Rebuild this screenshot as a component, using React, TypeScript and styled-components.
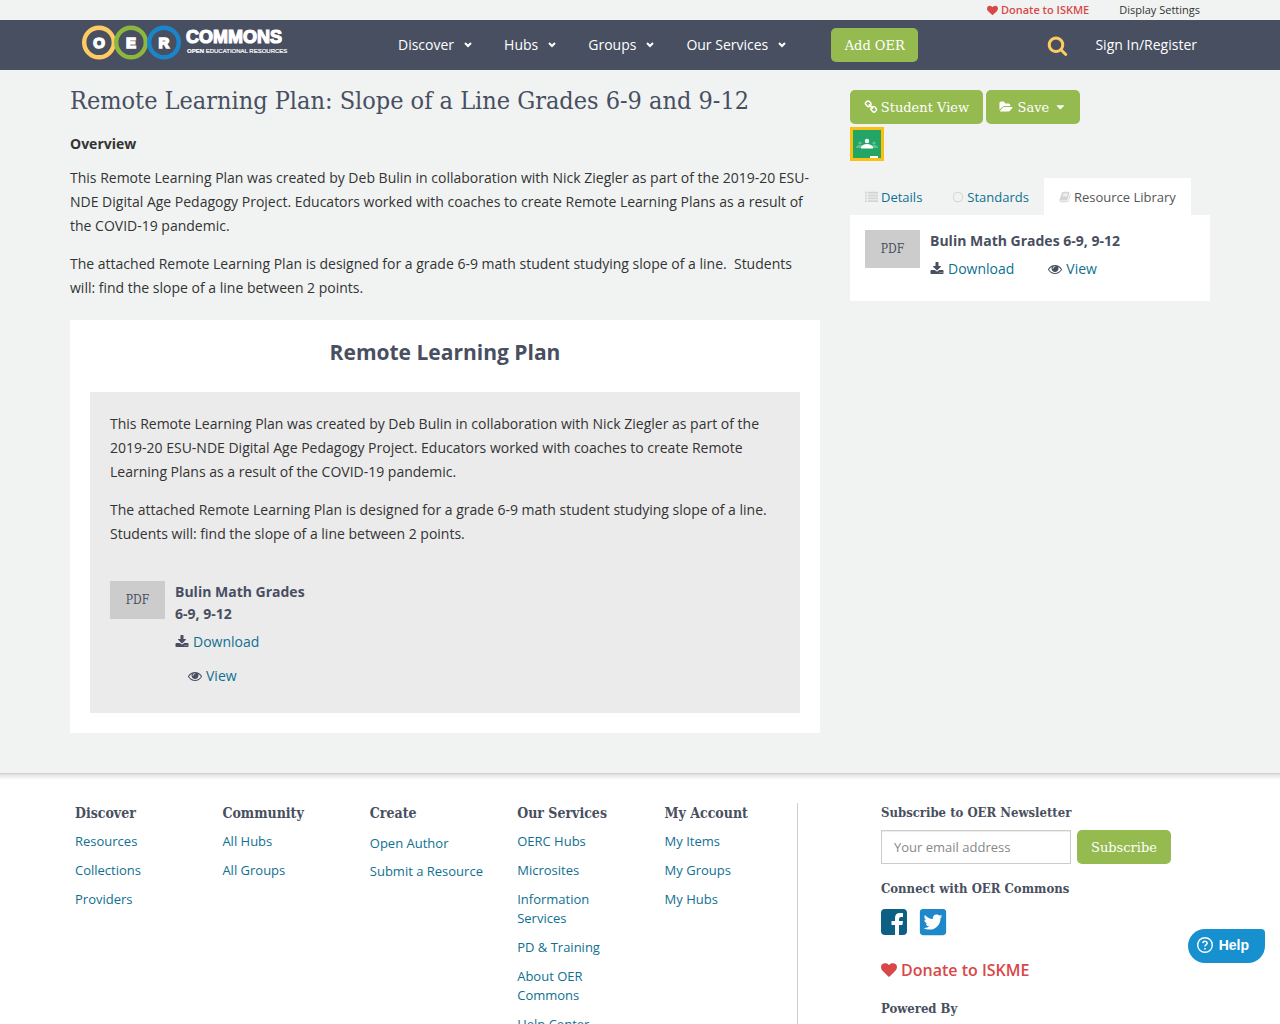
import React from "react";
import styled, { createGlobalStyle } from "styled-components";
import { FaTwitterSquare } from "react-icons/fa";

const sans = `"Open Sans", "Noto Sans", sans-serif`;
const slab = `"DejaVu Serif", serif`;
const slabNarrow = `"DejaVu Serif Condensed", "DejaVu Serif", serif`;
const navy = "#484f60";
const green = "#95ba4f";
const blue = "#0f7090";
const red = "#d94848";

const GlobalStyle = createGlobalStyle`
  *, *::before, *::after { box-sizing: border-box; }
  body { margin: 0; background: #f0f3f2; color: #333; font: 14px/24px ${sans}; }
  h1, h2, h3, p, ul { margin: 0; padding: 0; }
  ul { list-style: none; }
  a { text-decoration: none; color: ${blue}; }
  button, input { font-family: inherit; }
`;

/* Icons, drawn on a 1792-unit grid */
const paths = {
  heart: "M896 1664q-26 0-44-18l-624-602q-10-8-27.5-26T145 952.5 77 855 23.5 734 0 596q0-220 127-344t351-124q62 0 126.5 21.5t120 58T820 276t76 68q36-36 76-68t95.5-68.5 120-58T1314 128q224 0 351 124t127 344q0 221-229 450l-623 600q-18 18-44 18z",
  search: "M1216 832q0-185-131.5-316.5T768 384 451.5 515.5 320 832t131.5 316.5T768 1280t316.5-131.5T1216 832zm512 832q0 52-38 90t-90 38q-54 0-90-38l-343-342q-179 124-399 124-143 0-273.5-55.5t-225-150-150-225T64 832t55.5-273.5 150-225 225-150T768 128t273.5 55.5 225 150 150 225T1472 832q0 220-124 399l343 343q37 37 37 90z",
  folder: "M1943 952q0 31-31 66l-336 396q-43 51-120.5 86.5t-143.5 35.5h-1088q-34 0-60.5-13t-26.5-43q0-31 31-66l336-396q43-51 120.5-86.5t143.5-35.5h1088q34 0 60.5 13t26.5 43zm-343-344v160h-832q-94 0-197 47.5t-164 119.5l-337 396-5 6q0-4-.5-12.5t-.5-12.5v-960q0-92 66-158t158-66h320q92 0 158 66t66 158v32h544q92 0 158 66t66 158z",
  caret: "M1408 704q0 26-19 45l-448 448q-19 19-45 19t-45-19l-448-448q-19-19-19-45t19-45 45-19h896q26 0 45 19t19 45z",
  download: "M1344 1344q0-26-19-45t-45-19-45 19-19 45 19 45 45 19 45-19 19-45zm256 0q0-26-19-45t-45-19-45 19-19 45 19 45 45 19 45-19 19-45zm128-224v320q0 40-28 68t-68 28h-1472q-40 0-68-28t-28-68v-320q0-40 28-68t68-28h465l135 136q58 56 136 56t136-56l136-136h464q40 0 68 28t28 68zm-325-569q17 41-14 70l-448 448q-18 19-45 19t-45-19l-448-448q-31-29-14-70 17-39 59-39h256v-448q0-26 19-45t45-19h256q26 0 45 19t19 45v448h256q42 0 59 39z",
  eye: "M1664 960q-152-236-381-353 61 104 61 225 0 185-131.5 316.5t-316.5 131.5-316.5-131.5-131.5-316.5q0-121 61-225-229 117-381 353 133 205 333.5 326.5t434.5 121.5 434.5-121.5 333.5-326.5zm-720-384q0-20-14-34t-34-14q-125 0-214.5 89.5t-89.5 214.5q0 20 14 34t34 14 34-14 14-34q0-86 61-147t147-61q20 0 34-14t14-34zm848 384q0 34-20 69-140 230-376.5 368.5t-499.5 138.5-499.5-139-376.5-368q-20-35-20-69t20-69q140-229 376.5-368t499.5-139 499.5 139 376.5 368q20 35 20 69z",
  list: "M0 256h256v256H0zM0 640h256v256H0zM0 1024h256v256H0zM0 1408h256v256H0zM384 256h1408v256H384zM384 640h1408v256H384zM384 1024h1408v256H384zM384 1408h1408v256H384z",
  circle: "M896 128a768 768 0 1 0 0 1536 768 768 0 0 0 0-1536zm0 128a640 640 0 1 1 0 1280 640 640 0 0 1 0-1280z",
  book: "M1703 478q40 57 18 129l-275 906q-19 64-76.5 107.5t-122.5 43.5h-923q-77 0-148.5-53.5t-99.5-131.5q-24-67-2-127 0-4 3-27t4-37q1-8-3-21.5t-3-19.5q2-11 8-21t16.5-23.5 16.5-23.5q23-38 45-91.5t30-91.5q3-10 .5-30t-.5-28q3-11 17-28t17-23q21-36 42-92t25-90q1-9-2.5-32t.5-28q4-13 22-30.5t22-22.5q19-26 42.5-84.5t27.5-96.5q1-8-3-25.5t-2-26.5q2-8 9-18t18-23 17-21q8-12 16.5-30.5t15-35 16-36 19.5-32 26.5-23.5 36-11.5 47.5 5.5l-1 3q38-9 51-9h761q74 0 114 56t18 130l-274 906q-36 119-71.5 153.5t-128.5 34.5h-869q-27 0-38 15-11 16-1 43 24 70 144 70h923q29 0 56-15.5t35-41.5l300-987q7-22 5-57 38 15 59 43zm-1064 2q-4 13 2 22.5t20 9.5h608q13 0 25.5-9.5t16.5-22.5l21-64q4-13-2-22.5t-20-9.5h-608q-13 0-25.5 9.5t-16.5 22.5zm-83 256q-4 13 2 22.5t20 9.5h608q13 0 25.5-9.5t16.5-22.5l21-64q4-13-2-22.5t-20-9.5h-608q-13 0-25.5 9.5t-16.5 22.5z",
  link: "M1520 1216q0-40-28-68l-208-208q-28-28-68-28-42 0-72 32 3 3 19 18.5t21.5 21.5 15 19 13 25.5 3.5 27.5q0 40-28 68t-68 28q-15 0-27.5-3.5t-25.5-13-19-15-21.5-21.5-18.5-19q-33 31-33 73 0 40 28 68l206 207q27 27 68 27 40 0 68-26l147-146q28-28 28-67zm-703-705q0-40-28-68l-206-207q-28-28-68-28-39 0-68 27l-147 146q-28 28-28 67 0 40 28 68l208 208q27 27 68 27 42 0 72-31-3-3-19-18.5t-21.5-21.5-15-19-13-25.5-3.5-27.5q0-40 28-68t68-28q15 0 27.5 3.5t25.5 13 19 15 21.5 21.5 18.5 19q33-31 33-73zm895 705q0 120-85 203l-147 146q-83 83-203 83-121 0-204-85l-206-207q-83-83-83-203 0-123 88-209l-88-88q-86 88-208 88-120 0-204-84l-208-208q-84-84-84-204t85-203l147-146q83-83 203-83 121 0 204 85l206 207q83 83 83 203 0 123-88 209l88 88q86-88 208-88 120 0 204 84l208 208q84 84 84 204z",
};

function Icon({ name, size = 14, color = "currentColor" }: { name: keyof typeof paths; size?: number; color?: string }) {
  const w = name === "folder" ? 1943 : 1792;
  return (
    <svg width={Math.round((size * w) / 1792)} height={size} viewBox={`0 0 ${w} 1792`} fill={color} aria-hidden="true">
      <path d={paths[name]} />
    </svg>
  );
}

const Container = styled.div`
  width: 100%;
  max-width: 1170px;
  margin: 0 auto;
  padding: 0 15px;
`;

const TopLinks = styled(Container)`
  display: flex;
  justify-content: flex-end;
  gap: 30px;
  padding-right: 25px;
  font-size: 11px;
  line-height: 20px;
`;

const DonateLink = styled.a<{ $large?: boolean }>`
  display: inline-flex;
  align-items: center;
  gap: ${(p) => (p.$large ? 4 : 3)}px;
  color: ${red};
  font-weight: 600;
  font-size: ${(p) => (p.$large ? 16 : 11)}px;
`;

const PlainLink = styled.a`
  color: #333;
`;

const Header = styled.header`
  background: ${navy};
`;

const HeaderInner = styled(Container)`
  display: flex;
  align-items: center;
  height: 50px;
  padding: 0 28px 0 27px;
`;

const LogoLink = styled.a`
  display: flex;
  width: 316px;
  padding-bottom: 4px;
`;

const Nav = styled.nav`
  display: flex;
  gap: 32px;
`;

const NavButton = styled.button`
  display: flex;
  align-items: center;
  gap: 10px;
  padding: 0;
  border: 0;
  background: none;
  color: #fff;
  font-size: 14px;
  line-height: 24px;
`;

const Button = styled.button`
  display: inline-flex;
  align-items: center;
  justify-content: center;
  height: 34px;
  padding: 0 13px;
  border: 0;
  border-radius: 5px;
  background: ${green};
  color: #fff;
  font-family: ${slab};
  font-size: 13px;
  white-space: nowrap;
`;

const AddButton = styled(Button)`
  width: 87px;
  margin-left: 45px;
`;

const HeaderTools = styled.div`
  display: flex;
  align-items: center;
  gap: 27px;
  margin-left: auto;
`;

const IconButton = styled.button`
  display: flex;
  padding: 0;
  border: 0;
  background: none;
`;

const SignInLink = styled.a`
  color: #fff;
`;

const Columns = styled.div`
  display: grid;
  grid-template-columns: 2fr 1fr;
  max-width: 1170px;
  margin: 0 auto;
`;

const Main = styled.main`
  padding: 16px 15px 40px;
`;

const Aside = styled.aside`
  padding: 20px 15px;
`;

const Title = styled.h1`
  color: ${navy};
  font: 400 25px/30px ${slabNarrow};
  margin-bottom: 16px;
`;

const Overview = styled.h2`
  font-size: 14px;
  line-height: 24px;
  margin-bottom: 10px;
`;

const Paragraph = styled.p`
  margin-bottom: 14px;
`;

const PlanCard = styled.section`
  margin-top: 20px;
  padding: 20px;
  background: #fff;
`;

const PlanTitle = styled.h2`
  margin-bottom: 28px;
  color: ${navy};
  font-size: 21px;
  line-height: 24px;
  text-align: center;
`;

const PlanBody = styled.div`
  padding: 20px 20px 25px;
  background: #ebebeb;
`;

const Attachment = styled.div<{ $narrow?: boolean }>`
  display: flex;
  align-items: flex-start;
  gap: 10px;
  width: ${(p) => (p.$narrow ? "200px" : "auto")};
  margin-top: ${(p) => (p.$narrow ? 35 : 0)}px;
`;

const FileType = styled.div`
  flex: none;
  width: 55px;
  background: #ccc;
  color: ${navy};
  font: 12px/38px ${slabNarrow};
  text-align: center;
`;

const FileName = styled.h3`
  color: ${navy};
  font-size: 14px;
  line-height: 22px;
`;

const FileActions = styled.div<{ $stacked?: boolean }>`
  display: flex;
  flex-direction: ${(p) => (p.$stacked ? "column" : "row")};
  gap: ${(p) => (p.$stacked ? 10 : 34)}px;
  padding-top: 5px;
`;

const FileAction = styled.a<{ $indent?: boolean }>`
  display: flex;
  align-items: center;
  gap: 4px;
  padding-left: ${(p) => (p.$indent ? 13 : 0)}px;
  svg { color: ${navy}; }
`;

const ButtonRow = styled.div`
  display: flex;
  gap: 3px;
  margin-bottom: 3px;
`;

const StudentButton = styled(Button)`
  gap: 3px;
  width: 133px;
`;

const SaveButton = styled(Button)`
  gap: 5px;
  width: 94px;
`;

const Tabs = styled.div`
  display: flex;
  margin-top: 17px;
`;

const Tab = styled.button<{ $active?: boolean }>`
  display: flex;
  align-items: center;
  gap: 3px;
  height: 37px;
  padding: 0 15px;
  border: 0;
  background: ${(p) => (p.$active ? "#fff" : "transparent")};
  color: ${(p) => (p.$active ? "#555" : blue)};
  font-size: 13px;
  white-space: nowrap;
`;

const TabPanel = styled.div`
  padding: 15px 15px 20px;
  background: #fff;
`;

const Footer = styled.footer`
  padding-top: 30px;
  background: linear-gradient(#c8cbca, #e6e6e6 2px, #fff 7px);
`;

const FooterInner = styled(Container)`
  display: flex;
  padding-left: 20px;
`;

const FooterMenus = styled.div`
  display: grid;
  grid-template-columns: repeat(5, 1fr);
  column-gap: 15px;
  width: 64%;
  max-width: 723px;
  border-right: 1px solid #ccc;
  font-size: 13px;
  line-height: 19px;
`;

const FooterHeading = styled.h3`
  display: block;
  color: ${navy};
  font: 700 14px/20px ${slabNarrow};
  white-space: nowrap;
`;

const AsideHeading = styled(FooterHeading)`
  font-size: 13px;
`;

const MenuList = styled.ul<{ $compact?: boolean }>`
  display: flex;
  flex-direction: column;
  gap: ${(p) => (p.$compact ? 9 : 10)}px;
  padding: ${(p) => (p.$compact ? 11 : 9)}px 15px 0 0;
`;

const MenuLink = styled.a`
  display: block;
`;

const FooterAside = styled.div`
  flex: 1;
  padding-left: 83px;
`;

const SubscribeForm = styled.form`
  display: flex;
  gap: 6px;
  margin: 7px 0 15px;
`;

const EmailInput = styled.input`
  width: 190px;
  height: 34px;
  padding: 0 12px;
  border: 1px solid #ccc;
  box-shadow: inset 0 1px 1px rgba(0, 0, 0, 0.08);
  font-size: 13px;
  &::placeholder { color: #888; }
`;

const SubscribeButton = styled(Button)`
  width: 94px;
`;

const SocialLinks = styled.div`
  display: flex;
  align-items: center;
  gap: 9px;
  margin: 8px 0 21px;
`;

const SocialLink = styled.a`
  display: flex;
  color: #1e88cb;
`;

const PoweredBy = styled.div`
  padding-top: 14px;
`;

const HelpButton = styled.button`
  position: fixed;
  right: 15px;
  bottom: 61px;
  display: flex;
  align-items: center;
  gap: 5px;
  height: 34px;
  padding: 0 16px 2px 8px;
  border: 0;
  border-radius: 17px 4px 17px 17px;
  background: #1790d0;
  color: #fff;
  font: 700 14px "Liberation Sans", Arial, sans-serif;
`;

function Logo() {
  const rings: [string, string, number][] = [
    ["O", "#fdcb62", 17],
    ["E", "#8bb63f", 49],
    ["R", "#1b85cc", 82],
  ];
  return (
    <svg width="210" height="36" viewBox="0 0 210 36" role="img" aria-label="OER Commons">
      {rings.map(([letter, color, x]) => (
        <React.Fragment key={letter}>
          <circle cx={x} cy="17.500" r="14.800" fill="none" stroke={color} strokeWidth="4.400" />
          <text x={x} y="23" fill="#fff" stroke="#fff" strokeWidth="1.500" textAnchor="middle" fontFamily="Liberation Sans, Arial, sans-serif" fontSize="15" fontWeight="700">{letter}</text>
        </React.Fragment>
      ))}
      <text x="104" y="17.500" fill="#fff" stroke="#fff" strokeWidth="1.200" fontFamily="Liberation Sans, Arial, sans-serif" fontSize="18" fontWeight="700">COMMONS</text>
      <text x="105" y="28" fill="#fff" stroke="#fff" strokeWidth="0.200" fontFamily="Liberation Sans, Arial, sans-serif" fontSize="6">
        <tspan fontWeight="700">OPEN</tspan> EDUCATIONAL RESOURCES
      </text>
    </svg>
  );
}

function ClassroomIcon() {
  return (
    <svg width="34" height="34" viewBox="0 0 34 34" role="img" aria-label="Share to Google Classroom">
      <path d="M0 0h34v34H0z" fill="#fcc011" />
      <path d="M3 3h28v28H3z" fill="#23a566" />
      <g fill="#63bf91">
        <circle cx="10" cy="16" r="1.6" />
        <circle cx="24" cy="16" r="1.6" />
        <path d="M6 21v-1q1-2 4-2t4 1v2zM28 21v-1q-1-2-4-2t-4 1v2z" />
      </g>
      <g fill="#fff">
        <circle cx="17" cy="14" r="2.2" />
        <path d="M11 21.500v-1.500q2-3 6-3t6 3v1.500zM20 29h8v2h-8z" />
      </g>
    </svg>
  );
}

function FacebookIcon() {
  return (
    <svg width="28" height="28" viewBox="0 0 28 28" aria-hidden="true">
      <rect x="0" y="1" width="26" height="26" rx="4" fill="#0d5f84" />
      <path d="M14 27V17h-3.500v-4H14v-3q0-5 5-5h3v4h-2q-2 0-2 2v2h4l-.6 4H18v10z" fill="#fff" />
    </svg>
  );
}

function Chevron() {
  return (
    <svg width="8" height="6" viewBox="0 0 8 6" fill="none" stroke="currentColor" strokeWidth="2" aria-hidden="true">
      <path d="M1 1l3 3 3-3" />
    </svg>
  );
}

function FileAttachment({ narrow }: { narrow?: boolean }) {
  return (
    <Attachment $narrow={narrow}>
      <FileType>PDF</FileType>
      <div>
        <FileName>Bulin Math Grades 6-9, 9-12</FileName>
        <FileActions $stacked={narrow}>
          <FileAction href="#download"><Icon name="download" /> Download</FileAction>
          <FileAction href="#view" $indent={narrow}><Icon name="eye" /> View</FileAction>
        </FileActions>
      </div>
    </Attachment>
  );
}

const menus = [
  { title: "Discover", links: ["Resources", "Collections", "Providers"] },
  { title: "Community", links: ["All Hubs", "All Groups"] },
  { title: "Create", compact: true, links: ["Open Author", "Submit a Resource"] },
  { title: "Our Services", links: ["OERC Hubs", "Microsites", "Information Services", "PD & Training", "About OER Commons", "Help Center"] },
  { title: "My Account", links: ["My Items", "My Groups", "My Hubs"] },
];

export default function App() {
  return (
    <>
      <GlobalStyle />
      <TopLinks>
        <DonateLink href="#donate"><Icon name="heart" size={11} />Donate to ISKME</DonateLink>
        <PlainLink href="#display">Display Settings</PlainLink>
      </TopLinks>
      <Header>
        <HeaderInner>
          <LogoLink href="#home"><Logo /></LogoLink>
          <Nav>
            {["Discover", "Hubs", "Groups", "Our Services"].map((item) => (
              <NavButton key={item} type="button">{item}<Chevron /></NavButton>
            ))}
          </Nav>
          <AddButton type="button">Add OER</AddButton>
          <HeaderTools>
            <IconButton type="button" aria-label="Search"><Icon name="search" size={21} color="#fdcb62" /></IconButton>
            <SignInLink href="#signin">Sign In/Register</SignInLink>
          </HeaderTools>
        </HeaderInner>
      </Header>

      <Columns>
        <Main>
          <Title>Remote Learning Plan: Slope of a Line Grades 6-9 and 9-12</Title>
          <Overview>Overview</Overview>
          <Paragraph>This Remote Learning Plan was created by Deb Bulin in collaboration with Nick Ziegler as part of the 2019-20 ESU-NDE Digital Age Pedagogy Project. Educators worked with coaches to create Remote Learning Plans as a result of the COVID-19 pandemic.</Paragraph>
          <Paragraph>The attached Remote Learning Plan is designed for a grade 6-9 math student studying slope of a line.&nbsp; Students will: find the slope of a line between 2 points.</Paragraph>
          <PlanCard>
            <PlanTitle>Remote Learning Plan</PlanTitle>
            <PlanBody>
              <Paragraph>This Remote Learning Plan was created by Deb Bulin in collaboration with Nick Ziegler as part of the 2019-20 ESU-NDE Digital Age Pedagogy Project. Educators worked with coaches to create Remote Learning Plans as a result of the COVID-19 pandemic.</Paragraph>
              <Paragraph>The attached Remote Learning Plan is designed for a grade 6-9 math student studying slope of a line.&nbsp; Students will: find the slope of a line between 2 points.</Paragraph>
              <FileAttachment narrow />
            </PlanBody>
          </PlanCard>
        </Main>
        <Aside>
          <ButtonRow>
            <StudentButton type="button"><Icon name="link" />Student View</StudentButton>
            <SaveButton type="button"><Icon name="folder" />Save<Icon name="caret" /></SaveButton>
          </ButtonRow>
          <IconButton type="button"><ClassroomIcon /></IconButton>
          <Tabs role="tablist">
            <Tab role="tab" type="button"><Icon name="list" size={13} color="#d4d4d4" />Details</Tab>
            <Tab role="tab" type="button"><Icon name="circle" size={12} color="#d4d4d4" />Standards</Tab>
            <Tab role="tab" type="button" aria-selected $active><Icon name="book" size={12} color="#d4d4d4" />Resource Library</Tab>
          </Tabs>
          <TabPanel role="tabpanel"><FileAttachment /></TabPanel>
        </Aside>
      </Columns>

      <Footer>
        <FooterInner>
          <FooterMenus>
            {menus.map((menu) => (
              <div key={menu.title}>
                <FooterHeading>{menu.title}</FooterHeading>
                <MenuList $compact={menu.compact}>
                  {menu.links.map((link) => (
                    <li key={link}><MenuLink href="#menu">{link}</MenuLink></li>
                  ))}
                </MenuList>
              </div>
            ))}
          </FooterMenus>
          <FooterAside>
            <AsideHeading as="label" htmlFor="email">Subscribe to OER Newsletter</AsideHeading>
            <SubscribeForm>
              <EmailInput id="email" type="email" placeholder="Your email address" />
              <SubscribeButton type="button">Subscribe</SubscribeButton>
            </SubscribeForm>
            <AsideHeading>Connect with OER Commons</AsideHeading>
            <SocialLinks>
              <SocialLink href="#facebook" aria-label="Facebook"><FacebookIcon /></SocialLink>
              <SocialLink href="#twitter" aria-label="Twitter"><FaTwitterSquare size={30} /></SocialLink>
            </SocialLinks>
            <DonateLink href="#donate" $large><Icon name="heart" size={16} />Donate to ISKME</DonateLink>
            <PoweredBy><AsideHeading>Powered By</AsideHeading></PoweredBy>
          </FooterAside>
        </FooterInner>
      </Footer>

      <HelpButton type="button">
        <svg width="18" height="18" viewBox="0 0 18 18" fill="none" stroke="currentColor" strokeWidth="1.400" aria-hidden="true">
          <circle cx="9" cy="9" r="7.300" />
          <path d="M6.800 7.200q.2-2 2.200-2t2.200 1.800q0 1-1.200 1.800T9 10.500M9 12v1.500" strokeWidth="1.600" />
        </svg>
        Help
      </HelpButton>
    </>
  );
}
